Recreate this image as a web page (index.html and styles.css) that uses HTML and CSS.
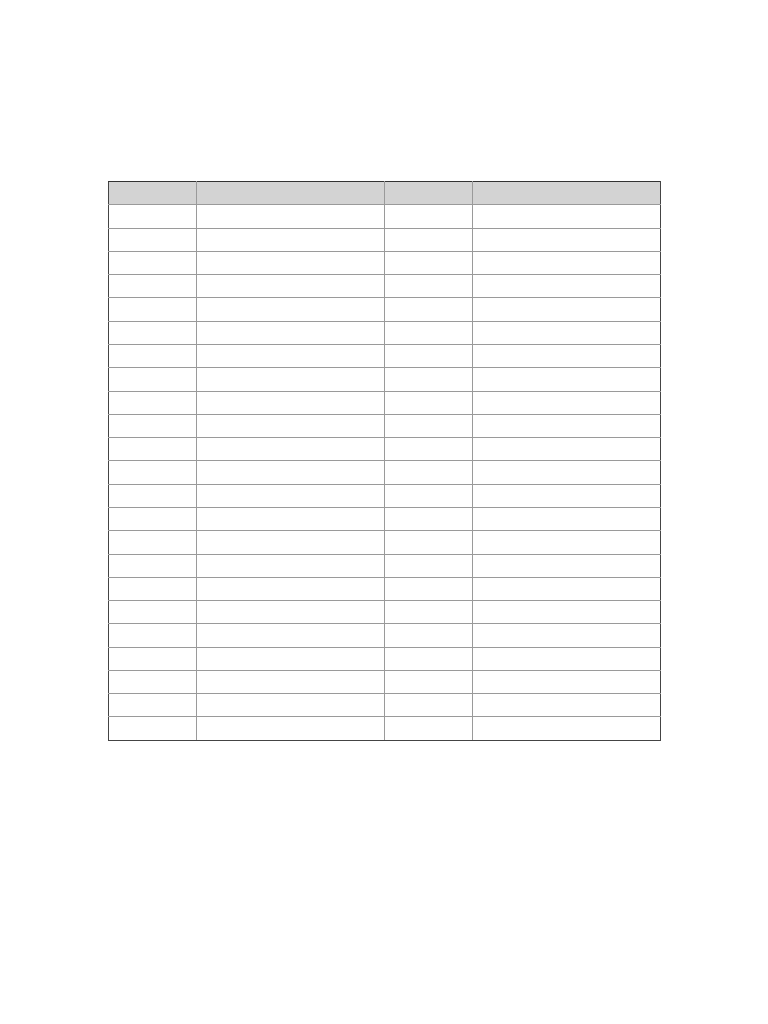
FILE: index.html
```html
<!DOCTYPE html>
<html>
<head>
<meta charset="utf-8">
<link rel="stylesheet" href="styles.css">
</head>
<body>
<div class="page">
<table class="sheet">
<colgroup><col class="c-narrow"><col class="c-wide"><col class="c-narrow"><col class="c-wide"></colgroup>
<thead><tr><th></th><th></th><th></th><th></th></tr></thead>
<tbody>
<tr><td></td><td></td><td></td><td></td></tr>
<tr><td></td><td></td><td></td><td></td></tr>
<tr><td></td><td></td><td></td><td></td></tr>
<tr><td></td><td></td><td></td><td></td></tr>
<tr><td></td><td></td><td></td><td></td></tr>
<tr><td></td><td></td><td></td><td></td></tr>
<tr><td></td><td></td><td></td><td></td></tr>
<tr><td></td><td></td><td></td><td></td></tr>
<tr><td></td><td></td><td></td><td></td></tr>
<tr><td></td><td></td><td></td><td></td></tr>
<tr><td></td><td></td><td></td><td></td></tr>
<tr><td></td><td></td><td></td><td></td></tr>
<tr><td></td><td></td><td></td><td></td></tr>
<tr><td></td><td></td><td></td><td></td></tr>
<tr><td></td><td></td><td></td><td></td></tr>
<tr><td></td><td></td><td></td><td></td></tr>
<tr><td></td><td></td><td></td><td></td></tr>
<tr><td></td><td></td><td></td><td></td></tr>
<tr><td></td><td></td><td></td><td></td></tr>
<tr><td></td><td></td><td></td><td></td></tr>
<tr><td></td><td></td><td></td><td></td></tr>
<tr><td></td><td></td><td></td><td></td></tr>
<tr><td></td><td></td><td></td><td></td></tr>
</tbody>
</table>
</div>
</body>
</html>
```

FILE: styles.css
```css
html, body {
  margin: 0;
  padding: 0;
  background: #ffffff;
  font-family: "Liberation Sans", Arial, sans-serif;
}
.page {
  padding: 181px 0 0 108px;
}
.sheet {
  border-collapse: collapse;
  table-layout: fixed;
  width: 552px;
}
.c-narrow { width: 88px; }
.c-wide { width: 188px; }
.sheet th, .sheet td {
  border: 1px solid #9a9a9a;
  padding: 0;
  box-sizing: border-box;
  height: 23.29px;
}
.sheet th {
  background: #d3d3d3;
  border-top-color: #333333;
}
.sheet tr > :first-child { border-left-color: #444444; }
.sheet tr > :last-child { border-right-color: #444444; }
.sheet tbody tr:last-child td { border-bottom-color: #444444; }
```
